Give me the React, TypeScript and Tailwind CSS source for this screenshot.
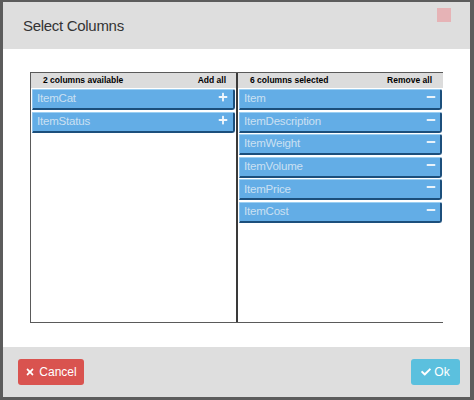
import { FaTimes, FaCheck, FaPlus, FaMinus } from 'react-icons/fa';

const available = ['ItemCat', 'ItemStatus'];
const selected = ['Item', 'ItemDescription', 'ItemWeight', 'ItemVolume', 'ItemPrice', 'ItemCost'];

const ColumnItem = ({ name, added }: { name: string; added: boolean }) => (
  <div className="relative h-[21px] mx-[1px] flex items-center pl-[4px] bg-[#63ade6] border-t border-t-[#9ccff2] border-l border-l-[#8cc4ee] border-b-2 border-b-[#1c4f7c] border-r-2 border-r-[#1c4f7c] rounded-br-[3px] rounded-tr-[2px]">
    <span className="text-[11.5px] tracking-[-0.2px] leading-none text-[#cbe0f2]">{name}</span>
    {added ? (
      <FaMinus className="absolute right-[4px] top-[2px] w-[10px] h-[10px] text-[#e8f2fa]" />
    ) : (
      <FaPlus className="absolute right-[5px] top-[2px] w-[10px] h-[10px] text-[#f0f6fb]" />
    )}
  </div>
);

const App = () => {
  return (
    <div
      className="w-[474px] h-[400px] bg-[#5c5c5c] pt-[2px] pl-[3px] pr-[4px] pb-[3px]"
      style={{ fontFamily: '"Liberation Sans", Arial, sans-serif' }}
    >
      <div className="flex flex-col h-full">
        <div className="h-[47px] bg-[#dedede] flex items-start justify-between pl-[20px] pr-[19px]">
          <h1 className="mt-[15px] text-[15px] tracking-[-0.3px] leading-[18px] text-[#333]">Select Columns</h1>
          <div className="mt-[6px] w-[14px] h-[14px] bg-[#e6b3b6]" />
        </div>

        <div className="flex-1 bg-white pt-[23px] pl-[27px]">
          <div className="w-[413px] h-[251px] border-t border-l border-b border-[#5a5a5a] flex">
            <div className="w-[205px] flex flex-col">
              <div className="h-[15px] bg-[#dcdcdc] flex items-center justify-between pl-[12px] pr-[10px] text-[8.5px] font-bold text-black">
                <span>{available.length} columns available</span>
                <span>Add all</span>
              </div>
              <div className="flex flex-col gap-[1.6px] pt-[1px]">
                {available.map((c) => (
                  <ColumnItem key={c} name={c} added={false} />
                ))}
              </div>
            </div>
            <div className="w-[2px] bg-[#3a3a3a]" />
            <div className="flex-1 flex flex-col">
              <div className="h-[15px] bg-[#dcdcdc] flex items-center justify-between pl-[12px] pr-[11px] text-[8.5px] font-bold text-black">
                <span>{selected.length} columns selected</span>
                <span>Remove all</span>
              </div>
              <div className="flex flex-col gap-[1.6px] pt-[1px]">
                {selected.map((c) => (
                  <ColumnItem key={c} name={c} added={true} />
                ))}
              </div>
            </div>
          </div>
        </div>

        <div className="h-[50px] bg-[#dedede] flex items-start justify-between pl-[15px] pr-[10px] pt-[12px]">
          <button className="h-[26px] w-[66px] rounded-[3px] bg-[#d9534f] text-white text-[12px] flex items-center justify-center gap-[4px]">
            <FaTimes className="w-[10px] h-[10px]" />
            Cancel
          </button>
          <button className="h-[26px] w-[49px] rounded-[3px] bg-[#5bc0de] text-white text-[12px] flex items-center justify-center gap-[3px]">
            <FaCheck className="w-[10px] h-[10px]" />
            Ok
          </button>
        </div>
      </div>
    </div>
  );
};

export default App;
